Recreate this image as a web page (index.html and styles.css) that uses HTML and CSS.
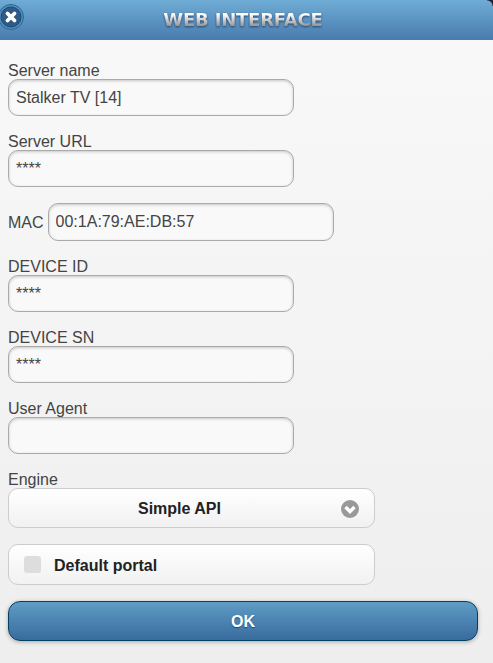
FILE: index.html
```html
<!DOCTYPE html>
<html>
	<head>
		<meta charset="UTF-8">
		<title>Web Interface</title>
		<link rel="stylesheet" href="styles.css">
	</head>
	<body>
		<div class="header">
			<a class="close">
				<svg width="26" height="26" viewBox="0 0 26 26">
					<circle cx="13" cy="13" r="12.500" fill="#4f8dbb" stroke="#2a6a99"/>
					<circle cx="13" cy="13" r="10" fill="#2f5a88" stroke="#1d4a75" stroke-width="1"/>
					<path d="M9.500 9.500l7 7M16.500 9.500l-7 7" stroke="#fff" stroke-width="3.800" stroke-linecap="round"/>
				</svg>
			</a>
			<h1>WEB INTERFACE</h1>
		</div>
		<form class="content">
			<div class="field">
				<label>Server name</label>
				<input class="text" type="text" value="Stalker TV [14]">
			</div>
			<div class="field">
				<label>Server URL</label>
				<input class="text" type="text" value="****">
			</div>
			<div class="field mac">
				<label>MAC</label>
				<input class="text" type="text" value="00:1A:79:AE:DB:57">
			</div>
			<div class="field">
				<label>DEVICE ID</label>
				<input class="text" type="text" value="****">
			</div>
			<div class="field">
				<label>DEVICE SN</label>
				<input class="text" type="text" value="****">
			</div>
			<div class="field">
				<label>User Agent</label>
				<input class="text" type="text" value="">
			</div>
			<div class="field">
				<label>Engine</label>
				<div class="btn select">
					<span>Simple API</span>
					<svg class="arrow" width="18" height="18" viewBox="0 0 18 18">
						<circle cx="9" cy="9" r="9" fill="#999"/>
						<path d="M4.500 7l4.500 4.500L13.500 7" fill="none" stroke="#fff" stroke-width="3.400"/>
					</svg>
				</div>
			</div>
			<div class="btn check">
				<i class="box"></i>
				<span>Default portal</span>
			</div>
			<div class="ok">OK</div>
		</form>
	</body>
</html>
```

FILE: styles.css
```css
*{
	margin: 0;
	padding: 0;
	box-sizing: border-box;
}
html{
	height: 100%;
}
body{
	min-height: 100%;
	overflow: hidden;
	font-family: "Liberation Sans", Arial, sans-serif;
	font-size: 16px;
	color: #444;
	background: linear-gradient(#f9f9f9, #eee);
}
.header{
	position: relative;
	height: 40px;
	display: flex;
	justify-content: center;
	align-items: center;
	background: linear-gradient(#6facd5, #497bae);
}
/*dark corner at the top right*/
.header:after{
	content: "";
	position: absolute;
	top: 0;
	right: 0;
	width: 6px;
	height: 6px;
	background: radial-gradient(circle at 0 100%, transparent 5px, #223 6px);
}
.header h1{
	font-family: "DejaVu Sans", sans-serif;
	font-size: 18px;
	font-weight: bold;
	line-height: 22px;
	letter-spacing: -.2px;
	margin-left: -7px;
	color: transparent;
	background: linear-gradient(#fff 25%, #999 75%);
	-webkit-background-clip: text;
	background-clip: text;
	filter: drop-shadow(0 1px 1px #24466c);
}
.close{
	position: absolute;
	left: -2px;
	top: 4px;
	height: 26px;
}
.content{
	padding: 21px 8px 0;
}
.field{
	margin-bottom: 16px;
}
.field label{
	display: block;
	height: 18px;
	line-height: 20px;
}
.mac label{
	line-height: 18px;
	margin-top: 1px;
}
.text{
	display: block;
	width: 286px;
	height: 37px;
	padding: 0 7px;
	font: 16px "Liberation Sans", Arial, sans-serif;
	color: #444;
	background: #f9f9f9;
	border: 1px solid #aaa;
	border-radius: 10px;
	box-shadow: inset 0 1px 3px rgba(0,0,0,.2);
	outline: none;
}
.mac{
	display: flex;
	align-items: center;
	gap: 4px;
}
.mac .text{
	height: 38px;
}
.btn{
	height: 40px;
	display: flex;
	align-items: center;
	width: 367px;
	padding-top: 1px;
	font-weight: bold;
	color: #222;
	background: linear-gradient(#fff, #f1f1f1);
	border: 1px solid #ccc;
	border-radius: 10px;
}
.select{
	position: relative;
	justify-content: center;
	padding-right: 24px;
}
.arrow{
	position: absolute;
	right: 15px;
	top: 11px;
}
.check{
	height: 41px;
	padding-top: 2px;
	padding-left: 15px;
	gap: 13px;
	margin-bottom: 16px;
}
.box{
	width: 17px;
	height: 17px;
	margin-top: -2px;
	background: #ddd;
	border-radius: 3px;
}
.ok{
	width: 470px;
	height: 40px;
	line-height: 40px;
	text-align: center;
	font-weight: bold;
	color: #fff;
	text-shadow: 0 1px 1px #194b7e;
	background: linear-gradient(#5f9cc5, #396b9e);
	border: 1px solid #044062;
	border-radius: 12px;
	box-shadow: 0 1px 4px rgba(0,0,0,.3);
}
```
